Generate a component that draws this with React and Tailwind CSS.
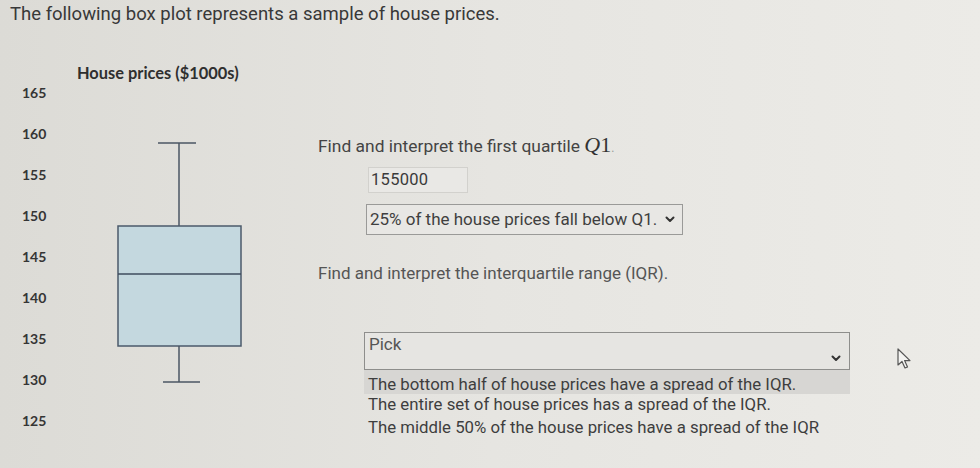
function Chevron() {
  return (
    <svg width="10" height="7" viewBox="0 0 10 7" className="shrink-0">
      <path d="M1.5 1.5 L5 5 L8.5 1.5" fill="none" stroke="#333" strokeWidth="2" strokeLinecap="round" strokeLinejoin="round" />
    </svg>
  );
}

function BoxPlot() {
  // whisker caps, box, median - drawn in px relative to chart column
  return (
    <svg width="220" height="320" viewBox="0 0 220 320" className="block">
      <line x1="81" y1="60" x2="119" y2="60" stroke="#4b5663" strokeWidth="1.5" />
      <line x1="102" y1="60" x2="102" y2="143" stroke="#4b5663" strokeWidth="1.5" />
      <rect x="41" y="143" width="123" height="120" fill="#c4d8df" stroke="#4b5a6b" strokeWidth="1.5" />
      <line x1="41" y1="191" x2="164" y2="191" stroke="#3f4d5e" strokeWidth="1.5" />
      <line x1="102" y1="263" x2="102" y2="299" stroke="#4b5663" strokeWidth="1.5" />
      <line x1="86" y1="299" x2="123" y2="299" stroke="#4b5663" strokeWidth="1.5" />
    </svg>
  );
}

export default function App() {
  const ticks = ["165", "160", "155", "150", "145", "140", "135", "130", "125"];
  const options = [
    "The bottom half of house prices have a spread of the IQR.",
    "The entire set of house prices has a spread of the IQR.",
    "The middle 50% of the house prices have a spread of the IQR",
  ];

  return (
    <div className="relative w-[980px] h-[468px] overflow-hidden bg-gradient-to-r from-[#dcdbd6] via-[#e6e5e1] to-[#ecebe7] font-['Roboto',sans-serif] text-[#3d3d3d]">
      {/* Intro */}
      <p className="pl-[10px] pt-[2px] h-[26px] text-[18.5px] leading-[24px] whitespace-nowrap text-[#383838]">
        The following box plot represents a sample of house prices.
      </p>

      <div className="flex -mt-[4px]">
        {/* Chart */}
        <div className="w-[318px] flex shrink-0">
          <div className="w-[77px] pl-[22px] pt-[50px] font-['Lato',sans-serif] font-bold text-[14px] text-[#353535]">
            {ticks.map((t) => (
              <div key={t} className="h-[41px] flex items-center">
                {t}
              </div>
            ))}
          </div>
          <div className="flex flex-col">
            <div className="mt-[41px] h-[20px] leading-[20px] font-['Lato',sans-serif] font-bold text-[16.4px] text-[#2f2f2f] whitespace-nowrap">
              House prices ($1000s)
            </div>
            <BoxPlot />
          </div>
        </div>

        {/* Questions */}
        <div className="flex-1 flex flex-col pt-[111px] text-[17.4px] text-[#444]">
          <p className="h-[24px] leading-[24px] whitespace-nowrap flex items-baseline">
            Find and interpret the first quartile&nbsp;
            <span className="font-['Liberation_Serif',serif] text-[22px] text-[#333]">
              <i>Q</i>1
            </span>
            <span className="text-[#999] text-[12px]">.</span>
          </p>

          <div className="mt-[10px] ml-[50px] w-[100px] h-[26px] border border-[#d2d1cd] bg-[#e9e8e5] flex items-center px-[2px] text-[16.5px] tracking-[0.3px] text-[#3a3a3a]">
            155000
          </div>

          <div className="mt-[11px] ml-[48px] w-[317px] h-[31px] border border-[#9a9a98] bg-[#e8e7e4] flex items-center justify-between pl-[3px] pr-[7px] text-[17px] text-[#3f3f3f]">
            <span className="whitespace-nowrap">25% of the house prices fall below Q1.</span>
            <Chevron />
          </div>

          <p className="mt-[26px] h-[24px] leading-[24px] whitespace-nowrap text-[17px] text-[#555]">
            Find and interpret the interquartile range (IQR).
          </p>

          <div className="mt-[47px] ml-[46px] w-[486px] h-[38px] border border-[#8e8e8c] bg-[#e6e5e2] flex flex-col justify-between pl-[4px] pr-[8px] pt-[1px] pb-[7px] text-[17px] text-[#555]">
            <span className="leading-[20px]">Pick</span>
            <div className="self-end">
              <Chevron />
            </div>
          </div>

          <div className="ml-[46px] w-[486px] text-[16.8px] text-[#3e3e3e]">
            {options.map((o, i) => (
              <div
                key={o}
                className={`pl-[4px] whitespace-nowrap leading-[20px] ${
                  i === 0 ? "h-[24px] pt-[4px] bg-[#d7d6d3]" : i === 1 ? "h-[20px]" : "h-[24px] pt-[3px]"
                }`}
              >
                {o}
              </div>
            ))}
          </div>
        </div>
      </div>

      {/* Mouse pointer */}
      <svg className="absolute left-[896px] top-[347px]" width="18" height="24" viewBox="0 0 18 24">
        <path d="M2 2 L2 18 L6 14.5 L9 21 L11.5 20 L8.6 13.6 L14 13.6 Z" fill="#f4f4f2" stroke="#555" strokeWidth="1.2" strokeLinejoin="round" />
      </svg>
    </div>
  );
}
